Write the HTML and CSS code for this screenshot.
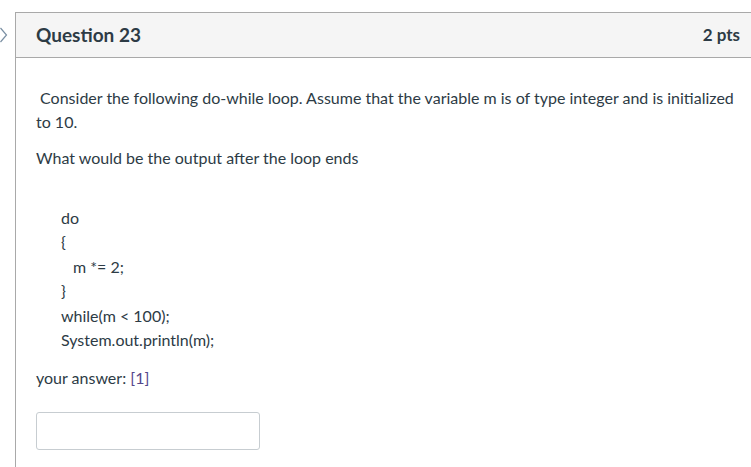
FILE: index.html
```html
<!DOCTYPE html>
<html>
<head>
<meta charset="utf-8">
<link rel="stylesheet" href="styles.css">
</head>
<body>
<div class="page">
  <div class="gutter">
    <svg class="chev" width="8" height="16" viewBox="0 0 8 16"><path d="M0.5 1 L6.5 8 L0.5 15" fill="none" stroke="#7a8fa3" stroke-width="1.2"/></svg>
  </div>
  <div class="card">
    <div class="header">
      <span class="title">Question 23</span>
      <span class="pts">2 pts</span>
    </div>
    <div class="body">
      <p class="p1">&nbsp;Consider the following do-while loop. Assume that the variable m is of type integer and is initialized to 10.</p>
      <p class="p2">What would be the output after the loop ends</p>
      <div class="code">
        <div class="line">do</div>
        <div class="line">{</div>
        <div class="line ind">m *= 2;</div>
        <div class="line">}</div>
        <div class="line">while(m &lt; 100);</div>
        <div class="line">System.out.println(m);</div>
      </div>
      <p class="ans">your answer: <span class="blank">[1]</span></p>
      <div class="input"></div>
    </div>
  </div>
</div>
</body>
</html>
```
FILE: styles.css
```css
html, body { margin: 0; padding: 0; background: #fff; }
body { font-family: Lato, "Liberation Sans", sans-serif; color: #2d3b45; overflow: hidden; }
.page { display: flex; padding-top: 12px; }
.gutter { width: 15px; flex: none; padding-top: 15px; }
.chev { display: block; }
.card { flex: 1; border-left: 1px solid #a9a9a9; border-top: 1px solid #a9a9a9; min-height: 470px; margin-right: -10px; }
.header { display: flex; justify-content: space-between; align-items: center; height: 45px; background: #f5f5f5; border-bottom: 1px solid #a9a9a9; padding: 0 21px 2px 20px; box-sizing: border-box; }
.title { font-weight: 700; font-size: 19px; color: #2d3b45; }
.pts { font-weight: 700; font-size: 17px; color: #2d3b45; }
.body { padding: 28px 10px 0 20px; font-size: 16px; line-height: 24px; }
.body p { margin: 0; }
.p1 { margin-bottom: 12px !important; }
.code { padding: 36px 0 0 25px; }
.line { height: 24.4px; line-height: 24px; }
.ind { padding-left: 12px; }
.ans { margin-top: 14px !important; }
.blank { color: #54478a; }
.input { margin-top: 22px; width: 222px; height: 36px; border: 1px solid #c7cdd1; border-radius: 3px; }
```
